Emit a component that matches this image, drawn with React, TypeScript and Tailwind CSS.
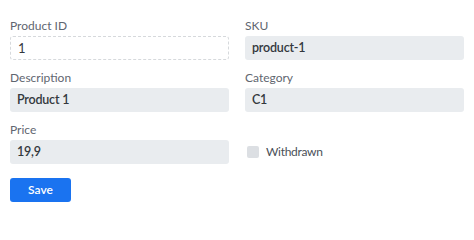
import { useState } from 'react';

function Field({ label, value, editable }: { label: string; value: string; editable?: boolean }) {
  return (
    <div className="flex flex-col">
      <label className="mb-1 h-3 text-[12px] leading-3 text-[#5f6670]">{label}</label>
      {editable ? (
        <input
          defaultValue={value}
          className="h-6 w-full rounded-[3px] border border-dashed border-[#d6d9dc] bg-white px-[7px] text-[13px] text-[#33383d] outline-none"
        />
      ) : (
        <div className="flex h-6 w-full items-center rounded-[3px] bg-[#e9ecef] px-[7px] text-[12.5px] font-semibold tracking-[-0.2px] text-[#33383d]">
          {value}
        </div>
      )}
    </div>
  );
}

export default function App() {
  const [withdrawn, setWithdrawn] = useState(false);

  return (
    <div className="bg-white px-[10px] pt-5 font-['Lato',sans-serif]">
      <div className="grid grid-cols-2 gap-x-4 gap-y-3">
        <Field label="Product ID" value="1" editable />
        <Field label="SKU" value="product-1" />
        <Field label="Description" value="Product 1" />
        <Field label="Category" value="C1" />
        <Field label="Price" value="19,9" />
        <div className="flex flex-col">
          <div className="mb-1 h-3" />
          <label className="flex h-6 cursor-pointer items-center gap-[7px] pl-[2px]">
            <span
              onClick={() => setWithdrawn(!withdrawn)}
              className="h-3 w-3 rounded-[2px] bg-[#dcdfe3]"
            />
            <span className="text-[12px] tracking-[-0.3px] text-[#4a5058]">Withdrawn</span>
          </label>
        </div>
      </div>
      <button className="mt-[14px] h-6 w-[61px] rounded-[3px] bg-[#1a73f0] text-[12px] font-semibold text-white">
        Save
      </button>
    </div>
  );
}
